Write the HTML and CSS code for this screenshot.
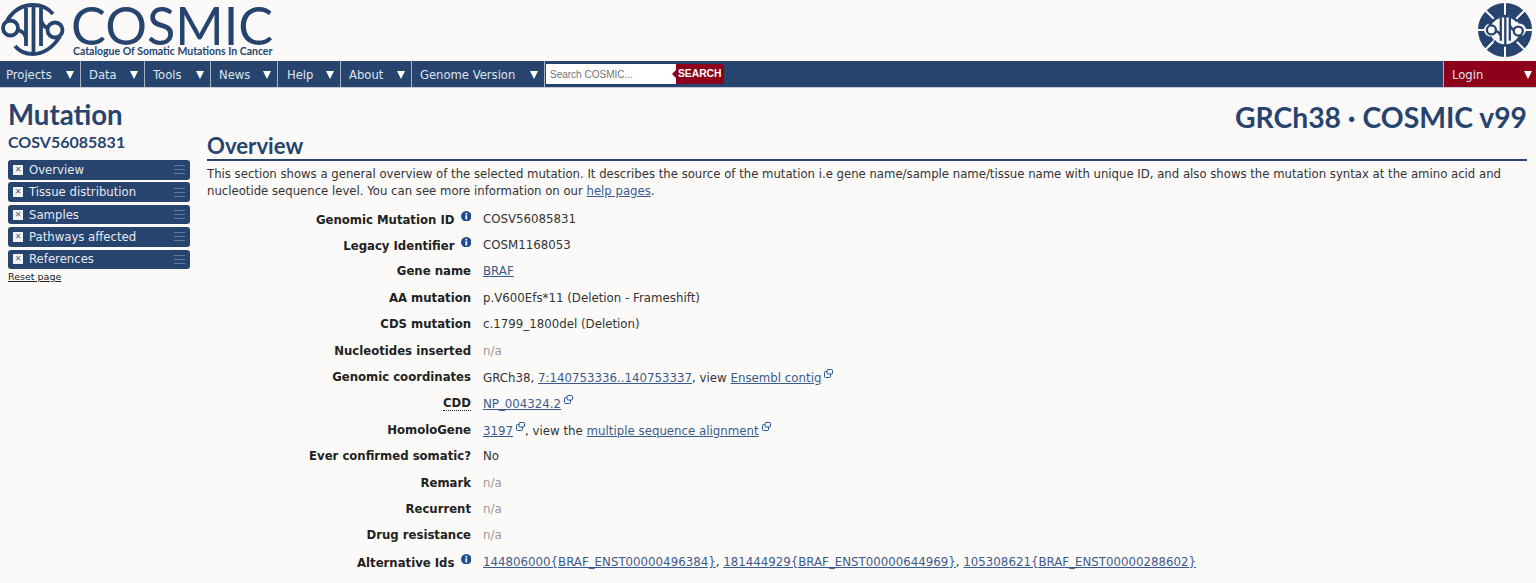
FILE: index.html
```html
<!DOCTYPE html>
<html lang="en">
<head>
    <meta charset="UTF-8">
    <title>COSMIC - Mutation COSV56085831</title>
    <link rel="stylesheet" href="styles.css">
</head>
<body>
    <svg class="defs" width="0" height="0">
        <symbol id="glyph" viewBox="0 0 66 58">
            <g fill="none" stroke="#27446f" stroke-width="3.800">
                <circle cx="10.500" cy="28" r="7.500"/>
                <circle cx="55" cy="30" r="7.500"/>
                <path d="M7 20.500C13 11 22 5 33 5c9 0 16 4 20 9"/>
                <path d="M60 36.500C53 47 44 54 33 54c-9 0-14-3-18-8"/>
                <path d="M26 8v38M33.500 6v47M41 8v38"/>
                <path d="M18 30c4 1 7 4 8 8M48 28c-4-1-6-4-7-8"/>
            </g>
        </symbol>
        <symbol id="ext" viewBox="0 0 9 9">
            <g fill="none" stroke="#27558f" stroke-width="1">
                <rect x="0.500" y="2.500" width="6" height="6" rx="1"/>
                <rect x="3" y="0.500" width="5.500" height="4.500" rx="1" fill="#fbfaf9"/>
            </g>
        </symbol>
        <symbol id="info" viewBox="0 0 10 10">
            <circle cx="5" cy="5" r="5" fill="#1c4c8f"/>
            <rect x="4.200" y="1.800" width="1.700" height="1.500" fill="#fff"/>
            <rect x="4.200" y="4" width="1.700" height="4" fill="#fff"/>
        </symbol>
    </svg>

    <header class="masthead">
        <div class="logo">
            <svg class="logo-glyph"><use href="#glyph"/></svg>
            <div class="wordmark">
                <div class="wordmark-name">COSMIC</div>
                <div class="wordmark-sub">Catalogue Of Somatic Mutations In Cancer</div>
            </div>
        </div>
        <svg class="seal" viewBox="0 0 54 54">
            <circle class="seal-ring" cx="27" cy="27" r="21"/>
            <path class="seal-cuts" d="M27 0v13M27 41v13M0 27h8M46 27h8M7 7l10 10M47 7l-10 10M7 47l10-10M47 47l-10-10"/>
            <circle class="seal-hole" cx="12.500" cy="27" r="6.500"/>
            <circle class="seal-hole" cx="41.500" cy="27" r="6.500"/>
            <svg x="7" y="10" width="40" height="35"><use href="#glyph"/></svg>
        </svg>
    </header>

    <nav class="menu">
        <div class="menu-item w-projects">Projects <span class="arrow"></span></div>
        <div class="menu-item w-data">Data <span class="arrow"></span></div>
        <div class="menu-item w-tools">Tools <span class="arrow"></span></div>
        <div class="menu-item w-news">News <span class="arrow"></span></div>
        <div class="menu-item w-help">Help <span class="arrow"></span></div>
        <div class="menu-item w-about">About <span class="arrow"></span></div>
        <div class="menu-item w-genome">Genome Version <span class="arrow"></span></div>
        <form class="search">
            <input class="search-input" type="text" placeholder="Search COSMIC...">
            <div class="search-btn">SEARCH</div>
        </form>
        <div class="menu-item login">Login <span class="arrow"></span></div>
    </nav>

    <div class="page">
        <aside class="sidebar">
            <h1 class="page-title">Mutation</h1>
            <h2 class="page-id">COSV56085831</h2>
            <ul class="sections">
                <li class="section"><span class="check">&#x2715;</span>Overview<span class="grip"></span></li>
                <li class="section"><span class="check">&#x2715;</span>Tissue distribution<span class="grip"></span></li>
                <li class="section"><span class="check">&#x2715;</span>Samples<span class="grip"></span></li>
                <li class="section"><span class="check">&#x2715;</span>Pathways affected<span class="grip"></span></li>
                <li class="section"><span class="check">&#x2715;</span>References<span class="grip"></span></li>
            </ul>
            <a class="reset" href="#">Reset page</a>
        </aside>

        <main class="content">
            <div class="version">GRCh38 · COSMIC v99</div>
            <h2 class="section-title">Overview</h2>
            <p class="intro">This section shows a general overview of the selected mutation. It describes the source of the mutation i.e gene name/sample name/tissue name with unique ID, and also shows the mutation syntax at the amino acid and nucleotide sequence level. You can see more information on our <a href="#">help pages</a>.</p>
            <dl class="facts">
                <dt>Genomic Mutation ID <svg class="info"><use href="#info"/></svg></dt>
                <dd>COSV56085831</dd>
                <dt>Legacy Identifier <svg class="info"><use href="#info"/></svg></dt>
                <dd>COSM1168053</dd>
                <dt>Gene name</dt>
                <dd><a href="#">BRAF</a></dd>
                <dt>AA mutation</dt>
                <dd>p.V600Efs*11 (Deletion - Frameshift)</dd>
                <dt>CDS mutation</dt>
                <dd>c.1799_1800del (Deletion)</dd>
                <dt>Nucleotides inserted</dt>
                <dd class="na">n/a</dd>
                <dt>Genomic coordinates</dt>
                <dd>GRCh38, <a href="#">7:140753336..140753337</a>, view <a href="#">Ensembl contig</a><svg class="ext"><use href="#ext"/></svg></dd>
                <dt><abbr>CDD</abbr></dt>
                <dd><a href="#">NP_004324.2</a><svg class="ext"><use href="#ext"/></svg></dd>
                <dt>HomoloGene</dt>
                <dd><a href="#">3197</a><svg class="ext"><use href="#ext"/></svg>, view the <a href="#">multiple sequence alignment</a><svg class="ext"><use href="#ext"/></svg></dd>
                <dt>Ever confirmed somatic?</dt>
                <dd>No</dd>
                <dt>Remark</dt>
                <dd class="na">n/a</dd>
                <dt>Recurrent</dt>
                <dd class="na">n/a</dd>
                <dt>Drug resistance</dt>
                <dd class="na">n/a</dd>
                <dt>Alternative Ids <svg class="info"><use href="#info"/></svg></dt>
                <dd><a href="#">144806000{BRAF_ENST00000496384}</a>, <a href="#">181444929{BRAF_ENST00000644969}</a>, <a href="#">105308621{BRAF_ENST00000288602}</a></dd>
            </dl>
        </main>
    </div>
</body>
</html>
```
FILE: styles.css
```css
html, body {
    height: 100%;
}
body {
    margin: 0;
    background-color: #fbfaf9;
    color: #333;
    font-family: 'DejaVu Sans', sans-serif;
    font-size: 11.8px;
    overflow: hidden;
}
a {
    color: #3b5a8c;
}
.defs {
    position: absolute;
}

/* masthead */
.masthead {
    height: 61px;
    display: flex;
    justify-content: space-between;
    align-items: flex-start;
}
.logo {
    display: flex;
    gap: 5px;
}
.logo-glyph {
    width: 66px;
    height: 58px;
}
.wordmark {
    color: #27446f;
    font-family: Lato, sans-serif;
    padding-top: 4px;
}
.wordmark-name {
    font-size: 52.200px;
    line-height: 41px;
}
.wordmark-sub {
    font-size: 10.500px;
    font-weight: 700;
    line-height: 12px;
    padding-left: 2px;
}
.seal {
    width: 54px;
    height: 54px;
    margin: 3px 4px 0 0;
}
.seal-ring {
    fill: none;
    stroke: #27446f;
    stroke-width: 12;
}
.seal-cuts {
    stroke: #fbfaf9;
    stroke-width: 2;
}
.seal-hole {
    fill: #fbfaf9;
}

/* menu bar */
.menu {
    height: 26px;
    background-color: #27446f;
    display: flex;
    color: #dfe4ec;
    border-bottom: 1px solid #c5ccd8;
}
.menu-item {
    display: flex;
    align-items: center;
    justify-content: space-between;
    box-sizing: border-box;
    padding: 1px 6px 0 6px;
    border-right: 1px solid #a9b4c5;
    font-size: 11.600px;
}
.arrow {
    width: 0;
    height: 0;
    border-left: 4.500px solid transparent;
    border-right: 4.500px solid transparent;
    border-top: 8px solid #fff;
    margin-top: 1px;
}
.w-projects { width: 81px; }
.w-data { width: 64px; padding-left: 8px; }
.w-tools { width: 66px; padding-left: 8px; }
.w-news { width: 67px; padding-left: 8px; }
.w-help { width: 63px; padding-left: 9px; }
.w-about { width: 71px; padding-left: 8px; }
.w-genome { width: 133px; padding-left: 8px; }
.search {
    display: flex;
    align-items: center;
    margin: 3px 0 0 1px;
    height: 20px;
}
.search-input {
    width: 130px;
    height: 20px;
    box-sizing: border-box;
    border: 0;
    padding: 0 4px;
    font-family: 'Liberation Sans', sans-serif;
    font-size: 10px;
}
.search-btn {
    position: relative;
    height: 20px;
    line-height: 20px;
    padding: 0 3px 0 2px;
    background-color: #8e0019;
    color: #fff;
    border-radius: 0 3px 3px 0;
    font-family: 'Liberation Sans', sans-serif;
    font-weight: 700;
    font-size: 10.300px;
}
.search-btn::before {
    content: "";
    position: absolute;
    left: -4px;
    top: 6px;
    border-top: 4px solid transparent;
    border-bottom: 4px solid transparent;
    border-right: 4px solid #8e0019;
}
.login {
    margin-left: auto;
    width: 93px;
    background-color: #8e0019;
    border-right: 0;
    border-left: 1px solid #a9b4c5;
    padding-left: 8px;
    padding-right: 4px;
}

/* page */
.page {
    display: flex;
}
.sidebar {
    width: 182px;
    margin-left: 8px;
    flex-shrink: 0;
}
.page-title {
    margin: 12px 0 0;
    font-family: Lato, sans-serif;
    font-size: 27.600px;
    line-height: 30px;
    font-weight: 700;
    color: #27446f;
}
.page-id {
    margin: 2px 0 8px;
    font-family: Lato, sans-serif;
    font-size: 16px;
    line-height: 20px;
    font-weight: 700;
    color: #27446f;
}
.sections {
    list-style: none;
    margin: 0;
    padding: 0;
}
.section {
    height: 19.500px;
    margin-bottom: 2.900px;
    background-color: #27446f;
    border-radius: 3px;
    color: #e6e9ef;
    display: flex;
    align-items: center;
    font-size: 11.700px;
}
.check {
    width: 10px;
    height: 10px;
    margin: 0 6px 0 5px;
    background-color: #f2f2f2;
    color: #4d6485;
    font-size: 8px;
    line-height: 10px;
    text-align: center;
}
.grip {
    width: 11px;
    height: 7px;
    margin: 0 5px 0 auto;
    border-top: 1px solid #60779a;
    border-bottom: 1px solid #60779a;
    position: relative;
}
.grip::after {
    content: "";
    position: absolute;
    left: 0;
    right: 0;
    top: 3px;
    border-top: 1px solid #60779a;
}
.reset {
    display: block;
    margin-top: -1px;
    font-size: 9.500px;
    color: #222;
}
.content {
    flex: 1;
    margin: 0 9px 0 17px;
    min-width: 0;
}
.version {
    margin-top: 14px;
    height: 30px;
    text-align: right;
    font-family: Lato, sans-serif;
    font-size: 28.300px;
    line-height: 30px;
    font-weight: 700;
    color: #27446f;
}
.section-title {
    margin: 0;
    font-family: Lato, sans-serif;
    font-size: 22.200px;
    line-height: 27px;
    font-weight: 700;
    color: #27446f;
    border-bottom: 2px solid #27446f;
}
.intro {
    margin: 5px 0 0;
    font-size: 11.700px;
    line-height: 17px;
}
.facts {
    display: grid;
    grid-template-columns: 264px 1fr;
    column-gap: 12px;
    margin: 10.600px 0 0;
    grid-auto-rows: 26.400px;
    line-height: 16px;
}
.facts dt {
    text-align: right;
    font-weight: 700;
    font-size: 11.700px;
    color: #222;
}
.facts dd {
    margin: 0;
}
.facts abbr {
    border-bottom: 1px dotted #222;
}
.na {
    color: #999;
}
.info {
    width: 10.500px;
    height: 10.500px;
    margin-left: 2px;
    vertical-align: 2px;
}
.ext {
    width: 9px;
    height: 9px;
    margin-left: 3px;
    vertical-align: 4px;
}
```
